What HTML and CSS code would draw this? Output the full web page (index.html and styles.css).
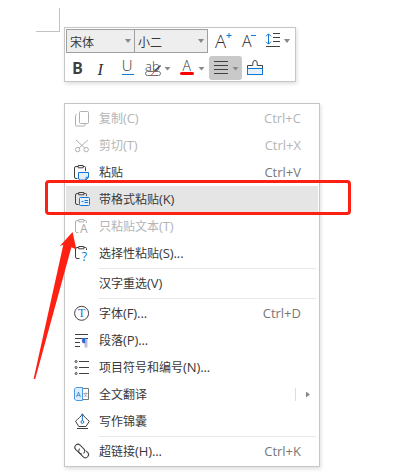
FILE: index.html
```html
<!DOCTYPE html>
<html lang="zh-CN">
<head>
<meta charset="utf-8">
<title>右键菜单</title>
<link rel="stylesheet" href="styles.css">
</head>
<body>
<div class="page">
  <div class="margin-mark"></div>

  <div class="toolbar">
    <div class="tool-row">
      <div class="combo font-name">宋体<i class="caret"></i></div>
      <div class="combo font-size">小二<i class="caret"></i></div>
      <svg class="grow" width="24" height="24" viewBox="0 0 24 24"><text class="letter" x="3" y="18.5" font-size="18.5">A</text><path class="blue" d="M14.5 6.5h5M17 4v5"/></svg>
      <svg class="shrink" width="24" height="24" viewBox="0 0 24 24"><text class="letter" x="2" y="17.7" font-size="16">A</text><path class="blue" d="M11 6.5h5"/></svg>
      <svg class="spacing" width="17" height="24" viewBox="0 0 17 24"><path class="blue" d="M3.5 5v10M1 7.3 3.5 4.8 6 7.3M1 12.7l2.5 2.5L6 12.7"/><path class="dark" d="M8 4.5h7M8 8.5h7M8 12.5h7M1 17.5h14"/></svg>
      <i class="caret spacing-caret"></i>
    </div>
    <div class="tool-row second">
      <svg width="25" height="24" viewBox="66 56 25 24"><text class="bold" x="72.4" y="73.8" font-size="16">B</text></svg>
      <svg width="25" height="24" viewBox="91 56 25 24"><text class="italic" x="97.5" y="74.5" font-size="16.5">I</text></svg>
      <svg width="26" height="24" viewBox="116 56 26 24"><text class="letter" x="121.7" y="71.3" font-size="15">U</text><path class="blue" d="M122 74.5h12"/></svg>
      <svg width="35" height="24" viewBox="142 56 35 24"><text class="letter" x="145" y="70.5" font-size="13">ab</text><rect class="swatch" x="145.5" y="71.5" width="15" height="4" rx="2"/><path class="red" d="M151 75.5l3.5-4"/><path class="dark thick" d="M155 70.8l5.6-5.3"/><path class="arrow" d="M164.5 67h6l-3 3.5z"/></svg>
      <svg width="32" height="24" viewBox="177 56 32 24"><text class="letter" x="182.4" y="70.8" font-size="14">A</text><rect class="redfill" x="180" y="72" width="14" height="3" rx="1.5"/><path class="arrow" d="M198.5 67h6l-3 3.5z"/></svg>
      <svg class="pressed" width="33" height="24" viewBox="209 56 33 24"><path class="dark" d="M214 61.5h14M214 65.5h14M214 69.5h14M214 73.5h14"/><path class="arrow" d="M232.5 67h6l-3 3.5z"/></svg>
      <svg width="27" height="24" viewBox="242 56 27 24"><rect class="page-blue" x="247.5" y="68.5" width="15" height="6"/><path class="dark" d="M247.5 68v-2.5h5.3V63q0-2.5 2.2-2.5t2.2 2.5v2.5h5.3V68"/></svg>
    </div>
  </div>

  <div class="menu">
    <div class="item disabled"><svg viewBox="0 0 18 18"><rect x="5.5" y="1.5" width="9" height="12" rx="1"/><path d="M3 4.5h-.5q-1 0-1 1V15q0 1 1 1H10q1 0 1-1v-1"/></svg><span class="label">复制<b>(C)</b></span><span class="key">Ctrl+C</span></div>
    <div class="item disabled"><svg viewBox="0 0 18 18"><circle cx="3.6" cy="12.6" r="2.2"/><circle cx="12.2" cy="12.6" r="2.2"/><path d="M2 3l8.7 8M13.8 3l-8.7 8"/></svg><span class="label">剪切<b>(T)</b></span><span class="key">Ctrl+X</span></div>
    <div class="item"><svg viewBox="0 0 18 18"><path d="M3.5 14.5H2q-1.5 0-1.5-1.5V4q0-1.5 1.5-1.5h2M9 2.5h1.5q1 0 1 1V7M4.2 1.5h5v2.3h-5z"/><path class="page-blue" d="M4.5 8.5h10v5l-2.5 2.5H6.5q-2 0-2-2z"/><path class="blue" d="M14.3 13.3H12V16"/></svg><span class="label">粘贴</span><span class="key">Ctrl+V</span></div>
    <div class="item active"><svg viewBox="0 0 18 18"><path d="M4.5 13.5H3q-1.5 0-1.5-1.5V4q0-1.5 1.5-1.5h1.5M10 2.5h1.5q1 0 1 1V5M4.7 1.5h5.2v2.3H4.7z"/><rect class="page-blue" x="5.5" y="6.5" width="10" height="8" rx="1"/><path class="blue" d="M7.5 10.5h2M10.5 9.5H14M10.5 11.5H14"/></svg><span class="label">带格式粘贴<b>(K)</b></span></div>
    <div class="item disabled"><svg viewBox="0 0 18 18"><path d="M4.5 14.5H3q-1.5 0-1.5-1.5V4q0-1.5 1.5-1.5h1.5M10 2.5h1.5q1 0 1 1V5M4.7 1.5h5.2v2.3H4.7z"/><text class="paste-a" x="6" y="15" font-size="12">A</text></svg><span class="label">只粘贴文本<b>(T)</b></span></div>
    <div class="item"><svg viewBox="0 0 18 18"><path d="M5.5 13.5H3q-1.5 0-1.5-1.5V4q0-1.5 1.5-1.5h1.5M10 2.5h1.5q1 0 1 1V5M4.7 1.5h5.2v2.3H4.7z"/><text class="mini-a" x="7.8" y="15.5" font-size="12.5">?</text></svg><span class="label">选择性粘贴<b>(S)...</b></span></div>
    <div class="sep"></div>
    <div class="item"><svg viewBox="0 0 18 18"></svg><span class="label">汉字重选<b>(V)</b></span></div>
    <div class="sep"></div>
    <div class="item"><svg viewBox="0 0 18 18"><circle cx="7.6" cy="8.3" r="7"/><text class="serif-t" x="4" y="12.2" font-size="12">T</text></svg><span class="label">字体<b>(F)...</b></span><span class="key">Ctrl+D</span></div>
    <div class="item"><svg viewBox="0 0 18 18"><path d="M1 2.5h13M1 6.5h13M1 10.5h5M1 14.5h5"/><text class="mini-a" x="7.2" y="14.2" font-size="10.5">¶</text></svg><span class="label">段落<b>(P)...</b></span></div>
    <div class="item"><svg viewBox="0 0 18 18"><path d="M5 2.5h10M5 8.5h10M5 14.5h10"/><circle cx="2.1" cy="2.5" r="1"/><circle cx="2.1" cy="8.5" r="1"/><circle cx="2.1" cy="14.5" r="1"/></svg><span class="label">项目符号和编号<b>(N)...</b></span></div>
    <div class="item"><svg viewBox="0 0 18 18"><path class="grayline" d="M8 2.5h6.5v11H8"/><text class="mini" x="9" y="10" font-size="5">文</text><path class="trans" d="M2 1.5h6.5v13H2L.5 13V3z"/><text class="mini-a" x="2" y="10.5" font-size="7.5">A</text></svg><span class="label">全文翻译</span><span class="submenu"><i></i></span></div>
    <div class="item"><svg viewBox="0 0 18 18"><path d="M8.4.8C6.9 3.8 4.3 5.5 1.5 8.2l3.3 5.3h7.2l3.3-5.3C12.5 5.5 9.9 3.8 8.4.8zM3 15.5h11"/><path class="blue" d="M8.4 1.5v6"/><circle class="blue" cx="8.4" cy="9" r="1.4"/></svg><span class="label">写作锦囊</span></div>
    <div class="sep"></div>
    <div class="item"><svg viewBox="0 0 18 18"><g transform="translate(7.7 8) rotate(44)"><path d="M2.3 2a3 3 0 0 1-2.3 1.1H-5.2a3.1 3.1 0 0 1 0-6.2H0a3.1 3.1 0 0 1 3 3.6"/><path d="M-2.9-.5a3.1 3.1 0 0 0 2.9 3.6H5.2a3.1 3.1 0 0 0 0-6.2H2.5"/></g></svg><span class="label">超链接<b>(H)...</b></span><span class="key">Ctrl+K</span></div>
  </div>

  <div class="highlight-box"></div>
  <svg class="pointer" width="46" height="150" viewBox="32 231 46 150"><path d="M72.6 232L76.4 249.5 71.4 247.2 35.2 379H33.6L63.3 244.7 59.6 246.2z"/></svg>
</div>
</body>
</html>
```
FILE: styles.css
```css
* { box-sizing: border-box; }
body { margin: 0; background: #fff; }
.page {
  position: relative;
  width: 418px;
  height: 476px;
  padding: 27px 0 0 64px;
  overflow: hidden;
  font: 12px "Noto Sans CJK SC", sans-serif;
  color: #383838;
}
.margin-mark {
  position: absolute;
  left: 36px;
  top: 8px;
  width: 24px;
  height: 24px;
  border: solid #c2c2c2;
  border-width: 0 1px 1px 0;
}
svg { display: block; flex: none; overflow: visible; fill: none; stroke: #404040; }
.toolbar {
  width: 232px;
  height: 55px;
  padding: 1px;
  border: 1px solid #c6c6c6;
  background: #fff;
  box-shadow: 1px 2px 4px rgba(0,0,0,.13);
}
.tool-row { display: flex; align-items: center; height: 24px; }
.second { margin-top: 3px; }
.combo {
  display: flex;
  align-items: center;
  justify-content: space-between;
  height: 24px;
  padding: 0 3px;
  border: 1px solid #a0a0a0;
  background: #eee;
}
.font-name { width: 69px; }
.font-size { width: 74px; margin-left: -1px; }
.caret {
  width: 6px;
  height: 4px;
  background: #888;
  clip-path: polygon(0 0, 100% 0, 50% 100%);
}
.grow { margin-left: 4px; }
.shrink { margin-left: 4px; }
.spacing { margin-left: 1px; }
.spacing-caret { margin-left: 2px; }
.letter { font-family: "Open Sans", sans-serif; font-weight: 300; fill: #303030; stroke: none; }
.bold { font-family: Roboto, sans-serif; font-weight: 700; fill: #404040; stroke: none; }
.italic { font-family: "Liberation Serif", serif; font-style: italic; fill: #303030; stroke: none; }
.dark { stroke: #404040; }
.blue { stroke: #1876cf; }
.thick { stroke-width: 1.4; }
.page-blue { fill: #e3f1fd; stroke: #1876cf; }
.swatch { fill: #fff; stroke: #707070; }
.red { stroke: #f33; }
.redfill { fill: #f00; stroke: none; }
.arrow { fill: #888; stroke: none; }
.pressed { border-radius: 3px; background: #c9c9c9; }

.menu {
  width: 256px;
  height: 364px;
  margin-top: 21px;
  padding: 1px;
  border: 1px solid #c6c6c6;
  background: #fff;
  box-shadow: 1px 2px 4px rgba(0,0,0,.13);
}
.item {
  display: flex;
  align-items: center;
  height: 27px;
  padding: 0 17px 0 8px;
}
.item > svg { width: 18px; height: 18px; margin-right: 7px; }
.label { height: 27px; line-height: 25px; white-space: nowrap; }
.label b { font: 13px/20px "Open Sans", sans-serif; letter-spacing: -.1px; }
.key {
  height: 27px;
  margin-left: auto;
  font: 13px/26px "Open Sans", sans-serif;
  color: #777;
}
.active { background: #e5e5e5; }
.disabled, .disabled .key { color: #b5b5b5; }
.disabled svg { stroke: #b0b0b0; }
.sep { height: 3px; margin: 0 2px 0 33px; background: linear-gradient(#e8e8e8, #e8e8e8) 0 1px / 100% 1px no-repeat; }
.grayline { stroke: #777; }
.trans { fill: #dceefd; stroke: #4b9be0; }
.mini { fill: #888; stroke: none; }
.mini-a { fill: #1876cf; stroke: none; font-family: "Open Sans", sans-serif; }
.serif-t { fill: #1876cf; stroke: none; font-family: "Liberation Serif", serif; }
.paste-a { fill: #a8a8a8; stroke: none; font-family: "Open Sans", sans-serif; }
.submenu {
  display: flex;
  align-items: center;
  justify-content: flex-end;
  width: 15px;
  height: 13px;
  margin-left: auto;
  margin-right: -9px;
  border-left: 1px solid #ddd;
}
.submenu i {
  width: 4px;
  height: 6px;
  background: #888;
  clip-path: polygon(0 0, 100% 50%, 0 100%);
}
.highlight-box {
  position: absolute;
  left: 45px;
  top: 180px;
  width: 306px;
  height: 35px;
  border: 3px solid #ff2014;
  border-radius: 4px;
}
.pointer { position: absolute; left: 32px; top: 231px; fill: #ff2014; stroke: none; }
```
